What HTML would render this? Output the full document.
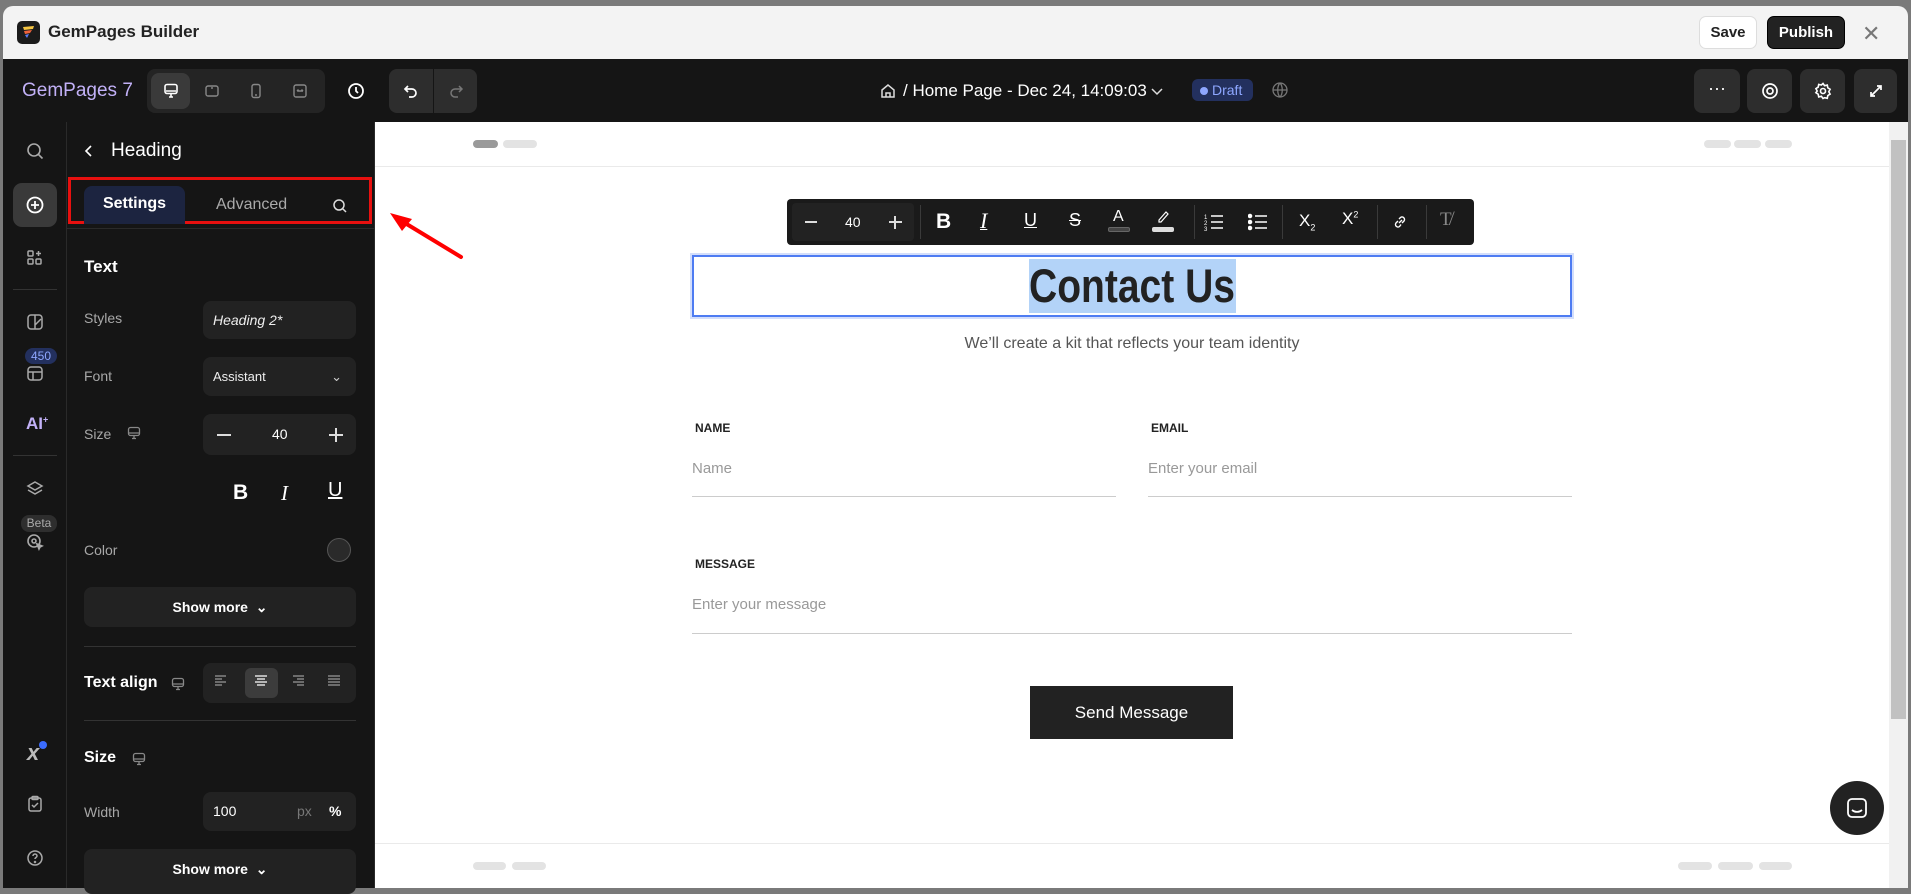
<!DOCTYPE html>
<html><head><meta charset="utf-8"><style>
*{box-sizing:border-box;margin:0;padding:0}
body{width:1911px;height:888px;overflow:hidden;background:#7a7a7a;font-family:"Liberation Sans",sans-serif;position:relative}
.a{position:absolute}
.t{color:#fff}
svg{display:block}
.ic{position:absolute;display:flex;align-items:center;justify-content:center}
.lbl{position:absolute;color:#a8a8a8;font-size:14px}
.box{position:absolute;background:#222;border-radius:8px}
.pill{position:absolute;height:8px;border-radius:4px;background:#e3e3e3}
</style></head><body>
<!-- title bar -->
<div class="a" style="left:3px;top:6px;width:1905px;height:53px;background:#f3f3f3;border-radius:10px 10px 0 0"></div>
<div class="a" style="left:17px;top:21px;width:23px;height:23px;background:#1b1b1b;border-radius:5px">
<svg width="23" height="23"><path d="M6 6 L17 5 L16 8 L7 9Z" fill="#f5c542"/><path d="M7 10 L15 9 L13 12 L8 13Z" fill="#f0643c"/><path d="M8 14 L12 13 L10 17Z" fill="#5b7cf7"/></svg></div>
<div class="a" style="left:48px;top:22px;font-size:17px;color:#222;font-weight:bold">GemPages Builder</div>
<div class="a" style="left:1699px;top:16px;width:58px;height:33px;background:#fff;border:1px solid #ddd;border-radius:7px;font-size:15px;font-weight:bold;color:#222;text-align:center;line-height:31px">Save</div>
<div class="a" style="left:1767px;top:16px;width:78px;height:33px;background:#222;border:1px solid #000;border-radius:7px;font-size:15px;font-weight:bold;color:#fff;text-align:center;line-height:31px">Publish</div>
<div class="a" style="left:1862px;top:21px;font-size:22px;color:#777">✕</div>
<!-- dark bar -->
<div class="a" style="left:3px;top:59px;width:1905px;height:63px;background:#151515"></div>
<div class="a" style="left:22px;top:80px;font-size:19px;color:#c2b1f7">GemPages 7</div>
<div class="box" style="left:147px;top:69px;width:178px;height:44px;background:#242424"></div>
<div class="box" style="left:151px;top:73px;width:39px;height:36px;background:#3a3a3a"></div>
<div class="ic" style="left:151px;top:73px;width:39px;height:36px"><svg width="16" height="16" fill="none" stroke="#fff" stroke-width="1.6"><rect x="2" y="1.5" width="12" height="9" rx="2"/><path d="M3 8h10M6 14h4M8 11v3"/></svg></div>
<div class="ic" style="left:196px;top:73px;width:32px;height:36px"><svg width="16" height="16" fill="none" stroke="#888" stroke-width="1.4"><rect x="2" y="3" width="12" height="10" rx="2"/><path d="M7 5h2"/></svg></div>
<div class="ic" style="left:240px;top:73px;width:32px;height:36px"><svg width="16" height="16" fill="none" stroke="#888" stroke-width="1.4"><rect x="4" y="1.5" width="8" height="13" rx="2"/><path d="M7 12h2"/></svg></div>
<div class="ic" style="left:284px;top:73px;width:32px;height:36px"><svg width="16" height="16" fill="none" stroke="#888" stroke-width="1.4"><rect x="2" y="2" width="12" height="12" rx="2"/><path d="M5 8h6M5 8l1.5-1.5M11 8l-1.5-1.5"/></svg></div>
<div class="ic" style="left:345px;top:80px;width:22px;height:22px"><svg width="18" height="18" fill="none" stroke="#fff" stroke-width="1.8"><circle cx="9" cy="9" r="7"/><path d="M9 5v4l2 2"/></svg></div>
<div class="box" style="left:389px;top:69px;width:88px;height:44px;background:#2d2d2d"></div>
<div class="a" style="left:433px;top:69px;width:1px;height:44px;background:#151515"></div>
<div class="ic" style="left:389px;top:69px;width:44px;height:44px"><svg width="16" height="16" fill="none" stroke="#fff" stroke-width="1.7"><path d="M5 3L2 6l3 3M2 6h7a4 4 0 010 8H6"/></svg></div>
<div class="ic" style="left:434px;top:69px;width:43px;height:44px"><svg width="16" height="16" fill="none" stroke="#777" stroke-width="1.5"><path d="M11 3l3 3-3 3M14 6H7a4 4 0 000 8h3"/></svg></div>
<div class="ic" style="left:879px;top:82px;width:18px;height:18px"><svg width="16" height="16" fill="none" stroke="#ddd" stroke-width="1.5"><path d="M2 7l6-5 6 5v7H2zM6 14v-4h4v4"/></svg></div>
<div class="a t" style="left:903px;top:81px;font-size:17px">/ Home Page - Dec 24, 14:09:03</div>
<div class="ic" style="left:1148px;top:82px;width:18px;height:18px"><svg width="14" height="14" fill="none" stroke="#ddd" stroke-width="1.5"><path d="M2 5l5 5 5-5"/></svg></div>
<div class="a" style="left:1192px;top:79px;width:61px;height:22px;background:#23305e;border-radius:6px;color:#8ea7ff;font-size:14px;line-height:22px;padding-left:8px"><span style="display:inline-block;width:8px;height:8px;border-radius:4px;background:#8ea7ff;margin-right:4px"></span>Draft</div>
<div class="ic" style="left:1270px;top:80px;width:20px;height:20px"><svg width="18" height="18" fill="none" stroke="#777" stroke-width="1.3"><circle cx="9" cy="9" r="7"/><path d="M2 9h14M9 2c3 3 3 11 0 14M9 2c-3 3-3 11 0 14"/></svg></div>
<div class="box" style="left:1694px;top:69px;width:46px;height:44px;background:#2d2d2d;color:#fff;text-align:center;line-height:38px;font-size:18px">···</div>
<div class="box" style="left:1747px;top:69px;width:45px;height:44px;background:#2d2d2d"></div>
<div class="ic" style="left:1747px;top:69px;width:45px;height:44px"><svg width="18" height="18" fill="none" stroke="#fff" stroke-width="1.7"><circle cx="9" cy="9" r="7"/><circle cx="9" cy="9" r="3"/></svg></div>
<div class="box" style="left:1800px;top:69px;width:45px;height:44px;background:#2d2d2d"></div>
<div class="ic" style="left:1800px;top:69px;width:45px;height:44px"><svg width="18" height="18" fill="none" stroke="#fff" stroke-width="1.6"><circle cx="9" cy="9" r="2.5"/><path d="M9 1.5l1.6 2.2 2.7-.6.5 2.7 2.3 1.5-1.3 2.4 1.3 2.4-2.3 1.5-.5 2.7-2.7-.6L9 16.5l-1.6-2.2-2.7.6-.5-2.7-2.3-1.5L3.200 9 1.900 6.600l2.300-1.500.5-2.700 2.700.6z"/></svg></div>
<div class="box" style="left:1854px;top:69px;width:43px;height:44px;background:#2d2d2d"></div>
<div class="ic" style="left:1854px;top:69px;width:43px;height:44px"><svg width="16" height="16" fill="none" stroke="#fff" stroke-width="1.7"><path d="M3 13L13 3M9 3h4v4M3 9v4h4"/></svg></div>
<!-- left rail + panel -->
<div class="a" style="left:3px;top:122px;width:371px;height:766px;background:#151515"></div>
<div class="a" style="left:66px;top:122px;width:1px;height:766px;background:#2a2a2a"></div>
<div class="a" style="left:374px;top:122px;width:1px;height:766px;background:#2a2a2a"></div>
<div class="ic" style="left:25px;top:141px;width:20px;height:20px"><svg width="18" height="18" fill="none" stroke="#aaa" stroke-width="1.6"><circle cx="8" cy="8" r="6"/><path d="M12.5 12.5l4 4"/></svg></div>
<div class="box" style="left:13px;top:183px;width:44px;height:44px;background:#3a3a3a;border-radius:9px"></div>
<div class="ic" style="left:13px;top:183px;width:44px;height:44px"><svg width="18" height="18" fill="none" stroke="#fff" stroke-width="1.8"><circle cx="9" cy="9" r="7.5"/><path d="M9 5v8M5 9h8"/></svg></div>
<div class="ic" style="left:25px;top:248px;width:20px;height:20px"><svg width="18" height="18" fill="none" stroke="#aaa" stroke-width="1.5"><rect x="2" y="2" width="5" height="5" rx="1"/><rect x="2" y="10" width="5" height="5" rx="1"/><rect x="10" y="10" width="5" height="5" rx="1"/><path d="M12.5 2v5M10 4.5h5"/></svg></div>
<div class="a" style="left:13px;top:289px;width:44px;height:1px;background:#333"></div>
<div class="ic" style="left:25px;top:312px;width:20px;height:20px"><svg width="18" height="18" fill="none" stroke="#aaa" stroke-width="1.5"><rect x="2" y="2" width="14" height="14" rx="3"/><path d="M9 2v14M9 12l6-6"/></svg></div>
<div class="a" style="left:25px;top:348px;width:32px;height:16px;background:#23305e;border-radius:8px;color:#8ea7ff;font-size:12px;text-align:center;line-height:16px">450</div>
<div class="ic" style="left:25px;top:364px;width:20px;height:20px"><svg width="18" height="18" fill="none" stroke="#aaa" stroke-width="1.5"><rect x="2" y="2" width="14" height="13" rx="3"/><path d="M2 7h14M7 7v8"/></svg></div>
<div class="a" style="left:26px;top:414px;font-size:17px;font-weight:bold;color:#c2b1f7">AI<sup style="font-size:9px">+</sup></div>
<div class="a" style="left:13px;top:455px;width:44px;height:1px;background:#333"></div>
<div class="ic" style="left:25px;top:479px;width:20px;height:20px"><svg width="18" height="18" fill="none" stroke="#aaa" stroke-width="1.5"><path d="M9 2l7 4-7 4-7-4zM2 10l7 4 7-4"/></svg></div>
<div class="a" style="left:21px;top:515px;width:36px;height:17px;background:#2e2e2e;border-radius:8px;color:#aaa;font-size:12px;text-align:center;line-height:17px">Beta</div>
<div class="ic" style="left:25px;top:532px;width:20px;height:20px"><svg width="18" height="18" fill="none" stroke="#aaa" stroke-width="1.6"><circle cx="8" cy="8" r="6"/><circle cx="8" cy="8" r="2"/><path d="M11 11l5 2-2 1-1 2z" fill="#aaa"/></svg></div>
<div class="a" style="left:27px;top:740px;font-size:22px;font-weight:bold;color:#bbb;font-style:italic">x</div>
<div class="a" style="left:39px;top:741px;width:8px;height:8px;border-radius:4px;background:#3b6cff"></div>
<div class="ic" style="left:25px;top:794px;width:20px;height:20px"><svg width="18" height="18" fill="none" stroke="#aaa" stroke-width="1.5"><rect x="3" y="3" width="12" height="13" rx="2"/><rect x="6" y="1.5" width="6" height="3" rx="1"/><path d="M6 10l2 2 4-4"/></svg></div>
<div class="ic" style="left:25px;top:848px;width:20px;height:20px"><svg width="18" height="18" fill="none" stroke="#aaa" stroke-width="1.5"><circle cx="9" cy="9" r="7"/><path d="M7 7a2 2 0 114 0c0 1.5-2 1.5-2 3"/><circle cx="9" cy="13" r=".5"/></svg></div>
<!-- panel content -->
<div class="ic" style="left:82px;top:142px;width:14px;height:18px"><svg width="10" height="14" fill="none" stroke="#fff" stroke-width="1.6"><path d="M7 2L2 7l5 5"/></svg></div>
<div class="a t" style="left:111px;top:140px;font-size:19px">Heading</div>
<div class="a" style="left:68px;top:177px;width:304px;height:47px;border:3px solid #e8100f"></div>
<div class="a" style="left:84px;top:186px;width:101px;height:38px;background:#1c2440;border-radius:8px 8px 0 0;color:#fff;font-weight:bold;font-size:16px;text-align:center;line-height:36px">Settings</div>
<div class="a" style="left:216px;top:196px;font-size:16px;color:#aaa">Advanced</div>
<div class="ic" style="left:330px;top:196px;width:20px;height:20px"><svg width="16" height="16" fill="none" stroke="#ddd" stroke-width="1.5"><circle cx="7" cy="7" r="5"/><path d="M11 11l3 3"/></svg></div>
<div class="a" style="left:67px;top:228px;width:307px;height:1px;background:#2a2a2a"></div>
<div class="a t" style="left:84px;top:257px;font-size:17px;font-weight:bold">Text</div>
<div class="lbl" style="left:84px;top:310px">Styles</div>
<div class="box" style="left:203px;top:301px;width:153px;height:38px;color:#eee;font-style:italic;font-size:14px;line-height:38px;padding-left:10px">Heading 2*</div>
<div class="lbl" style="left:84px;top:368px">Font</div>
<div class="box" style="left:203px;top:357px;width:153px;height:39px;color:#eee;font-size:13px;line-height:39px;padding-left:10px">Assistant<span style="position:absolute;right:14px;top:0;color:#ccc">⌄</span></div>
<div class="lbl" style="left:84px;top:426px">Size</div>
<div class="ic" style="left:126px;top:425px;width:16px;height:16px"><svg width="14" height="14" fill="none" stroke="#888" stroke-width="1.3"><rect x="1.5" y="1.5" width="11" height="8" rx="2"/><path d="M2 7h10M5 12.5h4M7 9.5v3"/></svg></div>
<div class="box" style="left:203px;top:414px;width:153px;height:41px"></div>
<div class="a" style="left:217px;top:434px;width:14px;height:2px;background:#ddd"></div>
<div class="a t" style="left:272px;top:426px;font-size:14px">40</div>
<div class="a" style="left:329px;top:434px;width:14px;height:2px;background:#ddd"></div>
<div class="a" style="left:335px;top:428px;width:2px;height:14px;background:#ddd"></div>
<div class="a t" style="left:233px;top:481px;font-size:21px;font-weight:bold">B</div>
<div class="a t" style="left:281px;top:481px;font-size:21px;font-style:italic;font-family:'Liberation Serif',serif">I</div>
<div class="a t" style="left:328px;top:479px;font-size:20px;text-decoration:underline">U</div>
<div class="lbl" style="left:84px;top:542px">Color</div>
<div class="a" style="left:327px;top:538px;width:24px;height:24px;border-radius:12px;background:#2a2a2a;border:1px solid #555"></div>
<div class="box" style="left:84px;top:587px;width:272px;height:40px;color:#fff;font-weight:bold;font-size:14px;text-align:center;line-height:40px">Show more &nbsp;⌄</div>
<div class="a" style="left:84px;top:646px;width:272px;height:1px;background:#333"></div>
<div class="a t" style="left:84px;top:674px;font-size:16px;font-weight:bold">Text align</div>
<div class="ic" style="left:170px;top:676px;width:16px;height:16px"><svg width="14" height="14" fill="none" stroke="#888" stroke-width="1.3"><rect x="1.5" y="1.5" width="11" height="8" rx="2"/><path d="M2 7h10M5 12.5h4M7 9.5v3"/></svg></div>
<div class="box" style="left:203px;top:663px;width:153px;height:40px"></div>
<div class="a" style="left:245px;top:668px;width:33px;height:30px;background:#3c3c3c;border-radius:6px"></div>
<div class="ic" style="left:214px;top:673px;width:14px;height:14px"><svg width="14" height="12" stroke="#999" stroke-width="1.2"><path d="M1 2h11M1 5h7M1 8h11M1 11h7"/></svg></div>
<div class="ic" style="left:254px;top:673px;width:14px;height:14px"><svg width="14" height="12" stroke="#fff" stroke-width="1.2"><path d="M1 2h12M3 5h8M1 8h12M3 11h8"/></svg></div>
<div class="ic" style="left:291px;top:673px;width:14px;height:14px"><svg width="14" height="12" stroke="#999" stroke-width="1.2"><path d="M2 2h11M6 5h7M2 8h11M6 11h7"/></svg></div>
<div class="ic" style="left:327px;top:673px;width:14px;height:14px"><svg width="14" height="12" stroke="#999" stroke-width="1.2"><path d="M1 2h12M1 5h12M1 8h12M1 11h12"/></svg></div>
<div class="a" style="left:84px;top:720px;width:272px;height:1px;background:#333"></div>
<div class="a t" style="left:84px;top:749px;font-size:16px;font-weight:bold">Size</div>
<div class="ic" style="left:131px;top:751px;width:16px;height:16px"><svg width="14" height="14" fill="none" stroke="#888" stroke-width="1.3"><rect x="1.5" y="1.5" width="11" height="8" rx="2"/><path d="M2 7h10M5 12.5h4M7 9.5v3"/></svg></div>
<div class="lbl" style="left:84px;top:804px">Width</div>
<div class="box" style="left:203px;top:792px;width:153px;height:39px;color:#fff;font-size:14px;line-height:39px;padding-left:10px">100<span style="position:absolute;left:94px;color:#777">px</span><span style="position:absolute;left:126px;font-weight:bold">%</span></div>
<div class="box" style="left:84px;top:849px;width:272px;height:45px;color:#fff;font-weight:bold;font-size:14px;text-align:center;line-height:40px">Show more &nbsp;⌄</div>
<!-- canvas -->
<div class="a" style="left:375px;top:122px;width:1514px;height:766px;background:#fff"></div>
<div class="a" style="left:1889px;top:122px;width:19px;height:766px;background:#f1f1f1"></div>
<div class="a" style="left:1891px;top:140px;width:15px;height:579px;background:#c1c1c1"></div>
<div class="a" style="left:1908px;top:0;width:3px;height:888px;background:#7a7a7a"></div>
<div class="pill" style="left:473px;top:140px;width:25px;background:#9a9a9a"></div>
<div class="pill" style="left:503px;top:140px;width:34px"></div>
<div class="pill" style="left:1704px;top:140px;width:27px"></div>
<div class="pill" style="left:1734px;top:140px;width:27px"></div>
<div class="pill" style="left:1765px;top:140px;width:27px"></div>
<div class="a" style="left:375px;top:166px;width:1514px;height:1px;background:#eaeaea"></div>
<div class="a" style="left:375px;top:843px;width:1514px;height:1px;background:#eaeaea"></div>
<div class="pill" style="left:473px;top:862px;width:33px"></div>
<div class="pill" style="left:512px;top:862px;width:34px"></div>
<div class="pill" style="left:1678px;top:862px;width:34px"></div>
<div class="pill" style="left:1718px;top:862px;width:35px"></div>
<div class="pill" style="left:1759px;top:862px;width:33px"></div>
<!-- arrow -->
<svg class="a" style="left:380px;top:205px" width="90" height="60"><path d="M81 52L20 15" stroke="#f00" stroke-width="4" stroke-linecap="round"/><path d="M10 8L32 14L22 26Z" fill="#f00"/></svg>
<!-- text toolbar -->
<div class="a" style="left:787px;top:199px;width:687px;height:46px;background:#1a1a1a;border-radius:4px"></div>
<div class="a" style="left:792px;top:203px;width:122px;height:38px;background:#222;border-radius:4px"></div>
<div class="a" style="left:805px;top:221px;width:12px;height:2px;background:#ddd"></div>
<div class="a t" style="left:845px;top:214px;font-size:14px">40</div>
<div class="a" style="left:889px;top:221px;width:13px;height:2px;background:#ddd"></div>
<div class="a" style="left:894px;top:216px;width:2px;height:13px;background:#ddd"></div>
<div class="a t" style="left:936px;top:210px;font-size:21px;font-weight:bold">B</div>
<div class="a t" style="left:980px;top:208px;font-size:22px;font-style:italic;font-family:'Liberation Serif',serif;text-decoration:underline;text-decoration-thickness:0">I</div>
<div class="a t" style="left:1024px;top:210px;font-size:18px;text-decoration:underline">U</div>
<div class="a t" style="left:1069px;top:210px;font-size:18px;text-decoration:line-through">S</div>
<div class="a t" style="left:1113px;top:208px;font-size:16px">A</div>
<div class="a" style="left:1108px;top:227px;width:22px;height:5px;border-radius:2px;background:#444;border:1px solid #666"></div>
<div class="ic" style="left:1155px;top:208px;width:16px;height:16px"><svg width="14" height="14" fill="none" stroke="#fff" stroke-width="1.2"><path d="M3 11l7-8 2 2-7 8H3z"/></svg></div>
<div class="a" style="left:1152px;top:227px;width:22px;height:5px;border-radius:2px;background:#ddd"></div>
<div class="ic" style="left:1204px;top:212px;width:20px;height:20px"><svg width="20" height="18" stroke="#fff" stroke-width="1.6"><path d="M7 3h12M7 9h12M7 15h12"/><text x="0" y="6" font-size="6" fill="#fff" stroke="none">1</text><text x="0" y="12" font-size="6" fill="#fff" stroke="none">2</text><text x="0" y="18" font-size="6" fill="#fff" stroke="none">3</text></svg></div>
<div class="ic" style="left:1248px;top:212px;width:20px;height:20px"><svg width="20" height="18" stroke="#fff" stroke-width="1.6"><path d="M7 3h12M7 9h12M7 15h12"/><circle cx="2" cy="3" r="1.5" fill="#fff"/><circle cx="2" cy="9" r="1.5" fill="#fff"/><circle cx="2" cy="15" r="1.5" fill="#fff"/></svg></div>
<div class="a t" style="left:1299px;top:211px;font-size:17px">X<sub style="font-size:9px">2</sub></div>
<div class="a t" style="left:1342px;top:209px;font-size:17px">X<sup style="font-size:9px">2</sup></div>
<div class="ic" style="left:1392px;top:214px;width:16px;height:16px"><svg width="16" height="16" fill="none" stroke="#fff" stroke-width="1.4"><path d="M7 9l3-3M6 7L4 9a2.5 2.5 0 003.5 3.5L9 10.5M10 9l2-2A2.5 2.5 0 008.5 3.5L7 5"/></svg></div>
<div class="a" style="left:1440px;top:209px;font-size:19px;color:#888;font-family:'Liberation Serif',serif">T̸</div>
<div class="a" style="left:920px;top:205px;width:1px;height:34px;background:#3a3a3a"></div>
<div class="a" style="left:1194px;top:205px;width:1px;height:34px;background:#3a3a3a"></div>
<div class="a" style="left:1282px;top:205px;width:1px;height:34px;background:#3a3a3a"></div>
<div class="a" style="left:1377px;top:205px;width:1px;height:34px;background:#3a3a3a"></div>
<div class="a" style="left:1426px;top:205px;width:1px;height:34px;background:#3a3a3a"></div>
<!-- heading -->
<div class="a" style="left:690px;top:253px;width:884px;height:66px;border:2px solid #d3defb"></div>
<div class="a" style="left:692px;top:255px;width:880px;height:62px;border:2px solid #4e7cf2"></div>
<div class="a" style="left:1029px;top:259px;width:207px;height:54px;background:#b3d3f8"></div>
<div class="a" style="left:932px;top:258px;width:400px;text-align:center;font-size:47px;font-weight:bold;color:#222;transform:scaleX(0.83)">Contact Us</div>
<div class="a" style="left:692px;top:335px;width:880px;text-align:center;font-size:16px;color:#555">We’ll create a kit that reflects your team identity</div>
<div class="a" style="left:695px;top:421px;font-size:12px;font-weight:bold;color:#222">NAME</div>
<div class="a" style="left:1151px;top:421px;font-size:12px;font-weight:bold;color:#222">EMAIL</div>
<div class="a" style="left:692px;top:460px;font-size:15px;color:#999">Name</div>
<div class="a" style="left:1148px;top:460px;font-size:15px;color:#999">Enter your email</div>
<div class="a" style="left:692px;top:496px;width:424px;height:1px;background:#ccc"></div>
<div class="a" style="left:1148px;top:496px;width:424px;height:1px;background:#ccc"></div>
<div class="a" style="left:695px;top:557px;font-size:12px;font-weight:bold;color:#222">MESSAGE</div>
<div class="a" style="left:692px;top:596px;font-size:15px;color:#999">Enter your message</div>
<div class="a" style="left:692px;top:633px;width:880px;height:1px;background:#ccc"></div>
<div class="a" style="left:1030px;top:686px;width:203px;height:53px;background:#222;color:#fff;font-size:17px;text-align:center;line-height:53px">Send Message</div>
<div class="a" style="left:1830px;top:781px;width:54px;height:54px;border-radius:27px;background:#222"></div>
<div class="ic" style="left:1830px;top:781px;width:54px;height:54px"><svg width="22" height="22" fill="none" stroke="#fff" stroke-width="1.8"><rect x="2" y="2" width="18" height="18" rx="4"/><path d="M6 13c3 2.5 7 2.5 10 0"/></svg></div>
</body></html>
